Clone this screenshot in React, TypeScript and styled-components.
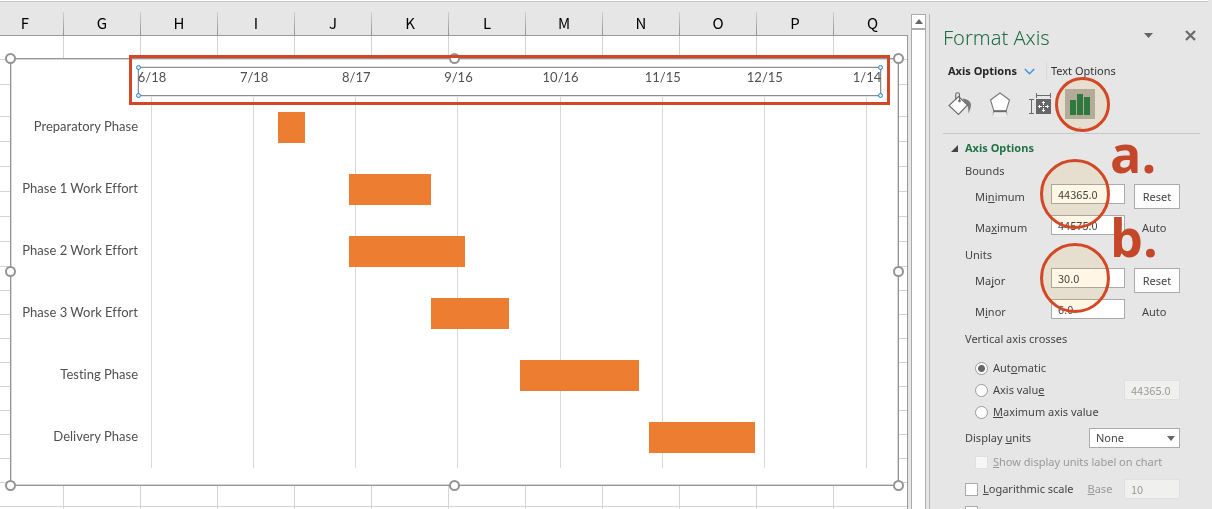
import React from "react";
import styled, { createGlobalStyle, css } from "styled-components";

const ui = '"Noto Sans", "Open Sans", sans-serif';
const fieldFont = '"Noto Sans CJK SC", "Noto Sans", sans-serif';
const red = "#d24726";
const line = "#ababab";

const GlobalStyle = createGlobalStyle`
  *, *::before, *::after { box-sizing: border-box; }
  body {
    margin: 0;
    overflow: hidden;
    background: #e6e6e6;
    color: #444;
    font: 11px/18px ${ui};
  }
  u { text-decoration-skip-ink: none; }
`;

const Window = styled.div`
  display: flex;
  flex-direction: column;
  height: 100vh;
  overflow: hidden;
`;

const FormulaBarEdge = styled.div`
  flex: none;
  height: 2px;
  margin-right: 4px;
  background: #fff;
  border-bottom: 1px solid #c6c6c6;
`;

const Workspace = styled.div`
  flex: 1;
  display: flex;
  min-height: 0;
`;

/* ---------- worksheet ---------- */

const Sheet = styled.main`
  position: relative;
  flex: 1;
  min-width: 0;
  overflow: hidden;
`;

const Grid = styled.table`
  width: calc(100% + 17px);
  margin-left: -13px;
  table-layout: fixed;
  border-collapse: separate;
  border-spacing: 0;
  background: #fff;
`;

const ColumnHead = styled.th`
  width: 77px;
  height: 34px;
  padding: 8px 1px 0 0;
  color: #000;
  font: 400 15px/24px ${fieldFont};
  text-align: center;
  border-bottom: 1px solid #999;
  background: linear-gradient(#d0d0d0, #8f8f8f) right 10px / 1px 24px no-repeat
    #e6e6e6;
`;

const Cell = styled.td<{ $height: number }>`
  height: ${(p) => p.$height}px;
  padding: 0;
  border-right: 1px solid #d4d4d4;
  border-bottom: 1px solid #d4d4d4;
`;

const SheetEdge = styled.div`
  flex: none;
  width: 4px;
  margin: 33px 0 0 -1px;
  border-left: 1px solid #999;
  z-index: 1;
`;

const Scrollbar = styled.div`
  flex: none;
  display: flex;
  flex-direction: column;
  width: 15px;
  margin: 12px 3px 0 0;
`;

const ScrollUp = styled.button`
  display: grid;
  place-items: center;
  height: 16px;
  padding: 0;
  background: #fff;
  border: 1px solid ${line};
  border-bottom-width: 2px;
`;

const ScrollTrack = styled.div`
  flex: 1;
  background: #fff;
  border: solid ${line};
  border-width: 0 1px;
`;

/* ---------- chart ---------- */

const Chart = styled.section`
  position: absolute;
  top: 56px;
  left: 10px;
  right: 9px;
  padding: 8px 0 17px;
  background: #fff;
  border: 1px solid #949494;
  box-shadow: inset 0 0 0 1px #d8d8d8;
  color: #505050;
  font: 13px/18px Lato, sans-serif;
  font-variant-ligatures: none;
`;

const AxisBox = styled.div`
  position: relative;
  display: flex;
  justify-content: space-between;
  height: 29px;
  margin: 0 17px 0 127px;
  padding: 0 13px;
  background: #fff;
  border: 1px solid #8c8c8c;
  box-shadow: 0 0 0 1px #e4e4e4;
`;

const AxisLabel = styled.span`
  display: flex;
  justify-content: center;
  width: 0;
  white-space: nowrap;
`;

const AxisCallout = styled.div`
  position: absolute;
  z-index: 2;
  inset: -13px -10px -10px;
  border: 3px solid ${red};
`;

const ChartBody = styled.div`
  display: flex;
  padding-right: 31px;
`;

const Categories = styled.div`
  flex: none;
  width: 140px;
  padding-right: 13px;
  text-align: right;
`;

const Category = styled.div`
  height: 62px;
  line-height: 60px;
`;

const Plot = styled.div`
  flex: 1;
  display: grid;
  border-left: 1px solid #d9d9d9;
`;

const GridLines = styled.div`
  grid-area: 1 / 1;
  display: grid;
  grid-template-columns: repeat(7, 1fr);
  > i {
    border-right: 1px solid #d9d9d9;
  }
`;

const Bars = styled.div`
  grid-area: 1 / 1;
  z-index: 1;
`;

const BarRow = styled.div`
  display: flex;
  align-items: center;
  height: 62px;
`;

const Bar = styled.div`
  height: 31px;
  background: #ed7d31;
`;

type Place = { x: string; y: string };

const Handle = styled.i<{ $at: Place; $small?: boolean }>`
  position: absolute;
  left: ${(p) => p.$at.x};
  top: ${(p) => p.$at.y};
  border-radius: 50%;
  ${(p) =>
    p.$small
      ? css`
          width: 5px;
          height: 5px;
          margin: -3px;
          background: #d5ebfa;
          border: 1px solid #2b88d0;
          z-index: 3;
        `
      : css`
          width: 11px;
          height: 11px;
          margin: -6px;
          background: #fff;
          border: 2px solid #949494;
        `}
`;

/* ---------- task pane ---------- */

const Pane = styled.aside`
  flex: none;
  width: 283px;
  margin-top: 12px;
  padding-right: 12px;
  border-left: 1px solid #b8b8b8;
`;

const TitleRow = styled.header`
  display: flex;
  align-items: center;
  height: 48px;
  padding-left: 13px;
`;

const Title = styled.h1`
  flex: 1;
  margin: 0;
  color: #1e6e42;
  font: 300 20px/28px ${ui};
`;

const IconButton = styled.button`
  display: grid;
  place-items: center;
  width: 20px;
  height: 20px;
  margin: 0 0 6px 22px;
  padding: 0;
  background: none;
  border: 0;
`;

const Tabs = styled.nav`
  display: flex;
  align-items: center;
  height: 18px;
  padding-left: 18px;
`;

const Tab = styled.button<{ $active?: boolean }>`
  display: flex;
  align-items: center;
  gap: 7px;
  padding: 0;
  background: none;
  border: 0;
  color: ${(p) => (p.$active ? "#262626" : "#333")};
  font: ${(p) => (p.$active ? 700 : 400)} 11px/18px ${ui};
  & + & {
    margin-left: 11px;
    padding-left: 4px;
    border-left: 1px solid #dadada;
  }
`;

const Groups = styled.div`
  display: flex;
  align-items: center;
  gap: 10px;
  height: 48px;
  margin-bottom: 5px;
  padding-left: 15px;
`;

const Group = styled.button<{ $active?: boolean }>`
  position: relative;
  display: grid;
  place-items: center;
  width: 30px;
  height: 30px;
  padding: 0;
  border: 0;
  background: ${(p) => (p.$active ? "#b4b0aa" : "none")};
`;

const Rule = styled.div`
  position: relative;
  height: 1px;
  margin-left: 13px;
  background: #c6c6c6;
  > svg {
    position: absolute;
    left: 130px;
    bottom: 0;
  }
`;

const SectionTitle = styled.h2`
  display: flex;
  align-items: center;
  gap: 7px;
  height: 28px;
  margin: 0;
  padding-left: 21px;
  color: #217346;
  font-size: 11px;
  font-weight: 700;
`;

const Options = styled.div`
  padding: 0 20px 0 35px;
`;

const SubHead = styled.h3`
  margin: 0;
  padding-bottom: 4px;
  font-size: 11px;
  font-weight: 400;
`;

const FieldRow = styled.div`
  display: grid;
  grid-template-columns: 76px 1fr 46px;
  column-gap: 9px;
  height: 31px;
  padding-left: 10px;
  line-height: 26px;
  > :first-child {
    margin-right: -9px;
  }
  > :nth-child(2) {
    margin-left: -9px;
  }
`;

const FieldBox = styled.div`
  position: relative;
  height: 20px;
`;

const TextField = styled.input`
  display: block;
  width: 100%;
  height: 20px;
  padding: 0 6px;
  background: #fff;
  border: 1px solid ${line};
  border-radius: 0;
  color: #444;
  font: 11px/18px ${fieldFont};
  &:disabled {
    width: 56px;
    margin-left: auto;
    background: #f0f0ee;
    border-color: #e0e0e0;
    color: #999;
  }
`;

const ResetButton = styled.button`
  height: 25px;
  padding: 0;
  background: #fdfdfd;
  border: 1px solid ${line};
  color: #444;
  font: 11px/18px ${ui};
`;

const Auto = styled.span`
  padding-left: 8px;
`;

const Tint = styled.i<{ $size: number }>`
  position: absolute;
  z-index: 2;
  width: ${(p) => p.$size}px;
  height: ${(p) => p.$size}px;
  top: ${(p) => (p.$size > 60 ? "-25px" : "-12px")};
  left: ${(p) => (p.$size > 60 ? "-11px" : "-10px")};
  border-radius: 50%;
  background: #fff6e6;
  mix-blend-mode: multiply;
  pointer-events: none;
`;

const Ring = styled(Tint)`
  background: none;
  border: 3px solid ${red};
  mix-blend-mode: normal;
`;

const Marker = styled.b`
  position: absolute;
  z-index: 4;
  left: 59px;
  bottom: 31px;
  color: #c4472a;
  font: 700 52px/40px "Open Sans", sans-serif;
  pointer-events: none;
`;

const Choices = styled.div`
  padding: 5px 0 5px 10px;
`;

const ChoiceRow = styled.div`
  display: flex;
  align-items: center;
  height: 22px;
`;

const UnitsRow = styled(ChoiceRow)`
  justify-content: space-between;
  height: 20px;
`;

const IndentRow = styled(ChoiceRow)`
  margin: 3px 0 6px 10px;
`;

const ScaleRow = styled(ChoiceRow)`
  height: 20px;
  margin-bottom: 7px;
`;

const CheckLabel = styled.label<{ $muted?: boolean }>`
  display: flex;
  align-items: center;
  gap: 5px;
  white-space: nowrap;
  color: ${(p) => (p.$muted ? "#999" : "#444")};
`;

const BaseLabel = styled.label`
  flex: 1;
  margin-left: 14px;
  color: #999;
`;

const Radio = styled.input`
  appearance: none;
  width: 13px;
  height: 13px;
  margin: 0;
  border: 1px solid #9b9b9b;
  border-radius: 50%;
  background: #fff;
  &:checked {
    background: radial-gradient(circle, #666 0 3px, #fff 4px);
  }
`;

const Check = styled.input`
  appearance: none;
  width: 13px;
  height: 13px;
  margin: 0;
  border: 1px solid ${line};
  background: #fff;
  &:disabled {
    border-color: #e0e0e0;
    background: #f6f6f6;
  }
`;

const SelectBox = styled.div`
  position: relative;
  width: 91px;
  > svg {
    position: absolute;
    right: 5px;
    top: 8px;
    pointer-events: none;
  }
`;

const Select = styled.select`
  appearance: none;
  display: block;
  width: 100%;
  height: 20px;
  padding: 0 6px;
  background: #fff;
  border: 1px solid ${line};
  border-radius: 0;
  color: #444;
  font: 11px/18px ${ui};
`;

/* ---------- icons ---------- */

const Caret = ({ w = 9, up = false }: { w?: number; up?: boolean }) => (
  <svg width={w} height="5" viewBox="0 0 9 5" preserveAspectRatio="none">
    <path d={up ? "M0 5L4.500 0L9 5Z" : "M0 0H9L4.500 5Z"} fill="#666" />
  </svg>
);

const CloseIcon = () => (
  <svg width="11" height="11" viewBox="0 0 11 11">
    <path d="M1 1L10 10M10 1L1 10" stroke="#6a6a6a" strokeWidth="2.200" />
  </svg>
);

const Chevron = () => (
  <svg width="11" height="7" viewBox="0 0 11 7">
    <path d="M.8 1L5.500 5.700L10.200 1" fill="none" stroke="#3a96dd" strokeWidth="1.400" />
  </svg>
);

const FillIcon = () => (
  <svg width="24" height="24" viewBox="0 0 24 24">
    <path d="M14.500 6.500C20.500 7 24 10.500 22.800 14.500C22.500 17 21.500 19 20.300 21.500C20.600 17 20.300 14 18 12Z" fill="#7a7a7a" />
    <path d="M10.500 4.500L19.500 13L10.500 22.500L1 13.500Z" fill="#fff" stroke="#6a6a6a" strokeWidth="1.100" />
    <path d="M7.700 8V2.500Q7.700 .7 9.500 .7Q11.500 .7 11.500 2.500V9" fill="none" stroke="#6a6a6a" strokeWidth="1.100" />
    <circle cx="11.500" cy="9" r="1.300" fill="#6a6a6a" />
  </svg>
);

const EffectsIcon = () => (
  <svg width="22" height="26" viewBox="0 0 22 26">
    <defs>
      <linearGradient id="reflection" x1="0" y1="0" x2="0" y2="1">
        <stop offset="0" stopColor="#a0a0a0" />
        <stop offset="1" stopColor="#e6e6e6" />
      </linearGradient>
    </defs>
    <path d="M5 21H17L18.500 25.500H3.500Z" fill="#ececec" />
    <path d="M4.600 20.500L3.500 25.500M17.400 20.500L18.500 25.500" stroke="url(#reflection)" strokeWidth="1.200" />
    <path d="M11 2L20.500 9L17 20.300H5L1.500 9Z" fill="#fff" stroke="#777" strokeWidth="1.100" />
    <path d="M4.500 20.200H17.500" stroke="#6a6a6a" strokeWidth="2" />
  </svg>
);

const SizeIcon = () => (
  <svg width="22" height="22" viewBox="0 0 22 22">
    <path d="M7.500 0V5M21.500 0V5M7.500 2.500H21.500M0 6.500H5M0 20.500H5M2.500 6.500V20.500" stroke="#6a6a6a" />
    <rect x="7" y="6" width="15" height="15" fill="#666" />
    <path d="M14.500 8.500V18.500M9.500 13.500H19.500" stroke="#fff" strokeDasharray="3.500 3" />
    <path d="M13 10L14.500 8.500L16 10M13 17L14.500 18.500L16 17M11 12L9.500 13.500L11 15M18 12L19.500 13.500L18 15M14 13.500H15" fill="none" stroke="#fff" />
  </svg>
);

const AxisIcon = () => (
  <svg width="20" height="22" viewBox="0 0 20 22">
    <path d="M0 7H6V22H0ZM7 1H13V22H7ZM14 4H20V22H14Z" fill="#2e7d43" />
  </svg>
);

/* ---------- data ---------- */

const columns = "FGHIJKLMNOPQ".split("");
const rowHeights = [24, 25, 32, ...Array(6).fill(25), ...Array(11).fill(24)];
const dates = ["6/18", "7/18", "8/17", "9/16", "10/16", "11/15", "12/15", "1/14"];
const span = 210;
const phases = [
  { name: "Preparatory Phase", start: 37, days: 8 },
  { name: "Phase 1 Work Effort", start: 58, days: 24 },
  { name: "Phase 2 Work Effort", start: 58, days: 34 },
  { name: "Phase 3 Work Effort", start: 82, days: 23 },
  { name: "Testing Phase", start: 108, days: 35 },
  { name: "Delivery Phase", start: 146, days: 31 },
];
const far = "calc(100% + 1px)";
const chartHandles: Place[] = [
  { x: "0%", y: "0%" }, { x: "50%", y: "0%" }, { x: far, y: "0%" },
  { x: "0%", y: "50%" }, { x: far, y: "50%" },
  { x: "0%", y: far }, { x: "50%", y: far }, { x: far, y: far },
];
const axisHandles: Place[] = [
  { x: "0%", y: "0%" }, { x: far, y: "0%" }, { x: "0%", y: far }, { x: far, y: far },
];

const Callout = ({ size, mark }: { size: number; mark?: string }) => (
  <>
    <Tint $size={size} />
    <Ring $size={size} />
    {mark && <Marker>{mark}</Marker>}
  </>
);

export default function App() {
  return (
    <Window>
      <GlobalStyle />
      <FormulaBarEdge />
      <Workspace>
        <Sheet>
          <Grid>
            <thead>
              <tr>
                {columns.map((c, i) => (
                  <ColumnHead key={c} scope="col" style={i === columns.length - 1 ? { width: "auto" } : undefined}>
                    {c}
                  </ColumnHead>
                ))}
              </tr>
            </thead>
            <tbody>
              {rowHeights.map((h, r) => (
                <tr key={r}>
                  {columns.map((c) => (
                    <Cell key={c} $height={h} />
                  ))}
                </tr>
              ))}
            </tbody>
          </Grid>
          <Chart>
            {chartHandles.map((at, i) => (
              <Handle key={i} $at={at} />
            ))}
            <AxisBox>
              {dates.map((d) => (
                <AxisLabel key={d}>{d}</AxisLabel>
              ))}
              {axisHandles.map((at, i) => (
                <Handle key={i} $at={at} $small />
              ))}
              <AxisCallout />
            </AxisBox>
            <ChartBody>
              <Categories>
                {phases.map((p) => (
                  <Category key={p.name}>{p.name}</Category>
                ))}
              </Categories>
              <Plot>
                <GridLines>
                  {dates.slice(1).map((d) => (
                    <i key={d} />
                  ))}
                </GridLines>
                <Bars>
                  {phases.map((p) => (
                    <BarRow key={p.name}>
                      <Bar
                        style={{
                          marginLeft: `${(p.start / span) * 100}%`,
                          width: `${(p.days / span) * 100}%`,
                        }}
                      />
                    </BarRow>
                  ))}
                </Bars>
              </Plot>
            </ChartBody>
          </Chart>
        </Sheet>
        <SheetEdge />
        <Scrollbar>
          <ScrollUp aria-label="Scroll up">
            <Caret w={8} up />
          </ScrollUp>
          <ScrollTrack />
        </Scrollbar>

        <Pane>
          <TitleRow>
            <Title>Format Axis</Title>
            <IconButton aria-label="Pane options">
              <Caret />
            </IconButton>
            <IconButton aria-label="Close">
              <CloseIcon />
            </IconButton>
          </TitleRow>
          <Tabs>
            <Tab $active>
              Axis Options <Chevron />
            </Tab>
            <Tab>Text Options</Tab>
          </Tabs>
          <Groups>
            <Group aria-label="Fill and line"><FillIcon /></Group>
            <Group aria-label="Effects"><EffectsIcon /></Group>
            <Group aria-label="Size and properties"><SizeIcon /></Group>
            <Group aria-label="Axis options" $active>
              <AxisIcon />
              <Callout size={55} />
            </Group>
          </Groups>
          <Rule>
            <svg width="14" height="8" viewBox="0 0 14 8">
              <path d="M0 7.500H1L7 1L13 7.500H14" fill="#e6e6e6" stroke="#c6c6c6" />
            </svg>
          </Rule>
          <SectionTitle>
            <svg width="7" height="7" viewBox="0 0 7 7">
              <path d="M7 0V7H0Z" fill="#444" />
            </svg>
            Axis Options
          </SectionTitle>
          <Options>
            <SubHead>Bounds</SubHead>
            <FieldRow>
              <label htmlFor="min">Mi<u>n</u>imum</label>
              <FieldBox>
                <TextField id="min" defaultValue="44365.0" />
                <Callout size={70} mark="a." />
              </FieldBox>
              <ResetButton>Reset</ResetButton>
            </FieldRow>
            <FieldRow>
              <label htmlFor="max">Ma<u>x</u>imum</label>
              <FieldBox>
                <TextField id="max" defaultValue="44575.0" />
              </FieldBox>
              <Auto>Auto</Auto>
            </FieldRow>
            <SubHead>Units</SubHead>
            <FieldRow>
              <label htmlFor="major">Ma<u>j</u>or</label>
              <FieldBox>
                <TextField id="major" defaultValue="30.0" />
                <Callout size={70} mark="b." />
              </FieldBox>
              <ResetButton>Reset</ResetButton>
            </FieldRow>
            <FieldRow>
              <label htmlFor="minor">M<u>i</u>nor</label>
              <FieldBox>
                <TextField id="minor" defaultValue="6.0" />
              </FieldBox>
              <Auto>Auto</Auto>
            </FieldRow>
            <SubHead>Vertical axis crosses</SubHead>
            <Choices>
              <ChoiceRow>
                <CheckLabel>
                  <Radio type="radio" name="crosses" defaultChecked />
                  <span>Aut<u>o</u>matic</span>
                </CheckLabel>
              </ChoiceRow>
              <ChoiceRow>
                <CheckLabel>
                  <Radio type="radio" name="crosses" />
                  <span>Axis valu<u>e</u></span>
                </CheckLabel>
                <TextField aria-label="Axis value" defaultValue="44365.0" disabled />
              </ChoiceRow>
              <ChoiceRow>
                <CheckLabel>
                  <Radio type="radio" name="crosses" />
                  <span><u>M</u>aximum axis value</span>
                </CheckLabel>
              </ChoiceRow>
            </Choices>
            <UnitsRow>
              <label htmlFor="display">Display <u>u</u>nits</label>
              <SelectBox>
                <Select id="display">
                  <option>None</option>
                </Select>
                <Caret w={8} />
              </SelectBox>
            </UnitsRow>
            <IndentRow>
              <CheckLabel $muted>
                <Check type="checkbox" disabled />
                <span><u>S</u>how display units label on chart</span>
              </CheckLabel>
            </IndentRow>
            <ScaleRow>
              <CheckLabel>
                <Check type="checkbox" />
                <span><u>L</u>ogarithmic scale</span>
              </CheckLabel>
              <BaseLabel htmlFor="base"><u>B</u>ase</BaseLabel>
              <TextField id="base" defaultValue="10" disabled />
            </ScaleRow>
            <Check type="checkbox" aria-label="Values in reverse order" />
          </Options>
        </Pane>
      </Workspace>
    </Window>
  );
}
